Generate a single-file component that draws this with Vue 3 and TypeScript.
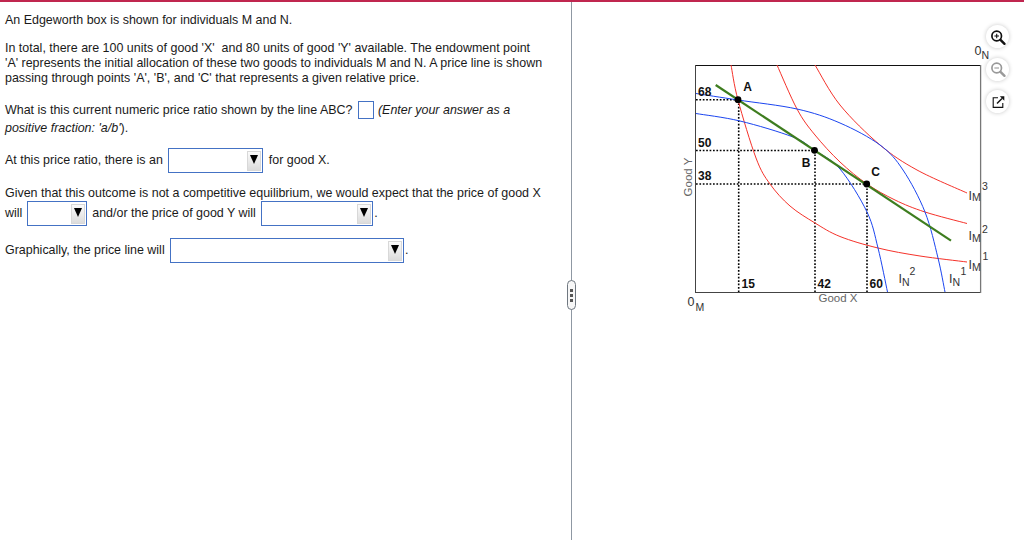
<script setup lang="ts">
type Pt = [number, number]

// catmull-rom through the points, good enough for the indifference curves
function curve(pts: Pt[]): string {
  let d = `M${pts[0][0]} ${pts[0][1]}`
  for (let i = 0; i < pts.length - 1; i++) {
    const p0 = pts[i - 1] ?? pts[i]
    const p1 = pts[i]
    const p2 = pts[i + 1]
    const p3 = pts[i + 2] ?? p2
    const c1x = p1[0] + (p2[0] - p0[0]) / 6
    const c1y = p1[1] + (p2[1] - p0[1]) / 6
    const c2x = p2[0] - (p3[0] - p1[0]) / 6
    const c2y = p2[1] - (p3[1] - p1[1]) / 6
    d += ` C${c1x.toFixed(1)} ${c1y.toFixed(1)} ${c2x.toFixed(1)} ${c2y.toFixed(1)} ${p2[0]} ${p2[1]}`
  }
  return d
}

const redCurves = [
  [[731, 65], [738, 100], [756, 158], [770, 184], [790, 206], [815, 223], [840, 236.5], [878, 248], [920, 256], [967, 262]],
  [[777, 65], [797, 109], [815, 135], [840, 162], [867, 184], [895, 200], [925, 212], [967, 223.5]],
  [[815, 65], [840, 105], [880, 145], [917, 170], [967, 193]],
].map(p => curve(p as Pt[]))

const blueCurves = [
  [[696, 93.5], [738, 100], [797, 109], [840, 123], [880, 145], [903, 170], [925, 212], [938, 258], [945, 292]],
  [[696, 113.5], [740, 121], [793, 137], [814, 150], [840, 169], [867, 212], [878, 248], [887.5, 292]],
].map(p => curve(p as Pt[]))

const points: { x: number; y: number }[] = [
  { x: 738, y: 99.7 },
  { x: 814.5, y: 150.3 },
  { x: 866.7, y: 184 },
]
</script>

<template>
  <div class="page">
    <section class="question">
      <p class="intro">An Edgeworth box is shown for individuals M and N.</p>
      <p class="total">
        In total, there are 100 units of good 'X'&nbsp; and 80 units of good 'Y' available. The endowment point<br />
        'A' represents the initial allocation of these two goods to individuals M and N. A price line is shown<br />
        passing through points 'A', 'B', and 'C' that represents a given relative price.
      </p>
      <p class="ratio">
        What is this current numeric price ratio shown by the line ABC?
        <span class="answer"></span>
        <i>(Enter your answer as a<br />positive fraction: 'a/b'</i>).
      </p>
      <p class="row excess">
        At this price ratio, there is an
        <span class="drop w95"><span class="arrow"></span></span>
        for good X.
      </p>
      <p class="given">Given that this outcome is not a competitive equilibrium, we would expect that the price of good X</p>
      <p class="row will">
        will
        <span class="drop w60"><span class="arrow"></span></span>
        and/or the price of good Y will
        <span class="drop w112"><span class="arrow"></span></span>
        <span class="dot">.</span>
      </p>
      <p class="row graph">
        Graphically, the price line will
        <span class="drop w234"><span class="arrow"></span></span>
        <span class="dot">.</span>
      </p>
    </section>

    <div class="divider">
      <div class="handle"><i></i><i></i><i></i></div>
    </div>

    <section class="figure">
      <svg class="chart" viewBox="572 2 413 538" width="413" height="538">
        <!-- box -->
        <line x1="695" y1="65.5" x2="981" y2="65.5" stroke="#111" stroke-width="1" />
        <line x1="695.5" y1="65" x2="695.5" y2="293" stroke="#444" stroke-width="1" />
        <line x1="695" y1="292.5" x2="981" y2="292.5" stroke="#444" stroke-width="1" />
        <line x1="980.6" y1="65" x2="980.6" y2="293" stroke="#777" stroke-width="1.3" />

        <!-- dotted guides -->
        <g class="guide">
          <line x1="696" y1="99.7" x2="738" y2="99.7" />
          <line x1="696" y1="150.5" x2="815" y2="150.5" />
          <line x1="696" y1="184" x2="867" y2="184" />
          <line x1="738.7" y1="100" x2="738.7" y2="292" />
          <line x1="815" y1="151" x2="815" y2="292" />
          <line x1="867" y1="185" x2="867" y2="292" />
        </g>

        <path v-for="(d, i) in redCurves" :key="'r' + i" :d="d" class="red" />
        <path v-for="(d, i) in blueCurves" :key="'b' + i" :d="d" class="blue" />
        <line x1="715.7" y1="85" x2="951" y2="240.7" class="price" />
        <circle v-for="p in points" :key="p.x" :cx="p.x" :cy="p.y" r="3.4" fill="#000" />

        <g class="bold">
          <text x="747.5" y="91" text-anchor="middle">A</text>
          <text x="806" y="167" text-anchor="middle">B</text>
          <text x="875.5" y="176" text-anchor="middle">C</text>
          <text x="698" y="96">68</text>
          <text x="698" y="147">50</text>
          <text x="698" y="180">38</text>
          <text x="741.5" y="288">15</text>
          <text x="817.5" y="288">42</text>
          <text x="869.5" y="288">60</text>
        </g>

        <g class="axis">
          <text x="838" y="302" text-anchor="middle">Good X</text>
          <text transform="translate(692 177) rotate(-90)" text-anchor="middle">Good Y</text>
        </g>

        <g class="label">
          <text class="big" x="687.5" y="306">0</text><text x="695.5" y="310.5">M</text>
          <text class="big" x="974.5" y="55">0</text><text x="981.5" y="59">N</text>

          <text class="big" x="968.5" y="200">I</text><text x="972" y="201">M</text><text x="982" y="190">3</text>
          <text class="big" x="968.5" y="240">I</text><text x="972" y="242">M</text><text x="982" y="233">2</text>
          <text class="big" x="968.5" y="269">I</text><text x="972" y="271">M</text><text x="982.5" y="260">1</text>
          <text class="big" x="898.5" y="283">I</text><text x="902" y="286">N</text><text x="909.5" y="275">2</text>
          <text class="big" x="949" y="283">I</text><text x="952.5" y="286">N</text><text x="960.5" y="275">1</text>
        </g>
      </svg>

      <div class="tools">
        <button class="tool" type="button" aria-label="Zoom in">
          <svg viewBox="0 0 20 20" width="20" height="20">
            <circle cx="8.7" cy="9" r="4.8" class="glass" />
            <path d="M6.4 9h4.6M8.7 6.7v4.6" stroke="#111" stroke-width="1.1" fill="none" />
            <path d="M12.5 12.8l4 4" stroke="#111" stroke-width="2.4" stroke-linecap="round" />
          </svg>
        </button>
        <button class="tool" type="button" aria-label="Zoom out">
          <svg viewBox="0 0 20 20" width="20" height="20">
            <circle cx="8.7" cy="9" r="4.8" class="glass off" />
            <path d="M6.4 9h4.6" stroke="#999" stroke-width="1.1" fill="none" />
            <path d="M12.5 12.8l4 4" stroke="#999" stroke-width="2.4" stroke-linecap="round" />
          </svg>
        </button>
        <button class="tool" type="button" aria-label="Open in new window">
          <svg viewBox="0 0 20 20" width="20" height="20">
            <path d="M10 5.8H5.2v9.6h9.6V11" fill="none" stroke="#111" stroke-width="1.1" />
            <path d="M9 11.5l5-5" stroke="#111" stroke-width="1.4" />
            <path d="M11.8 4.3h4.5v4.5z" fill="#111" />
          </svg>
        </button>
      </div>
    </section>
  </div>
</template>

<style>
html,
body {
  margin: 0;
  background: #fff;
}
</style>

<style scoped>
.page {
  display: flex;
  width: 1024px;
  height: 540px;
  box-sizing: border-box;
  border-top: 2px solid #c0264f;
  background: #fff;
  overflow: hidden;
  font-family: "Liberation Sans", Arial, sans-serif;
  font-size: 12.46px;
  line-height: 15px;
  color: #1a1a1a;
}
.question {
  width: 571px;
  flex: none;
  box-sizing: border-box;
  padding: 11px 0 0 5px;
}
.question p {
  margin: 0;
  white-space: nowrap;
}
.total {
  margin-top: 13px !important;
}
.ratio {
  margin-top: 15px !important;
  line-height: 18px;
}
.excess {
  margin-top: 11px !important;
}
.given {
  margin-top: 13px !important;
}
.will {
  margin-top: 0 !important;
}
.graph {
  margin-top: 12px !important;
}
.row {
  height: 25px;
  line-height: 25px;
}
.answer {
  display: inline-block;
  width: 14px;
  height: 16px;
  margin: 0 4px 0 2px;
  vertical-align: -5px;
  border: 1px solid #4472c4;
  background: #fff;
}
.drop {
  display: inline-block;
  height: 25px;
  box-sizing: border-box;
  margin: 0 2px;
  vertical-align: top;
  border: 1px solid #4472c4;
  background: #fff;
  position: relative;
}
.will .drop:first-of-type {
  margin-left: 1px;
}
.w95 { width: 95px; }
.w60 { width: 60px; }
.w112 { width: 112px; }
.w234 { width: 234px; }
.arrow {
  position: absolute;
  right: 1px;
  top: 2px;
  width: 14px;
  height: 20px;
  box-sizing: border-box;
  border: 1px solid #d8d8d8;
  background: linear-gradient(#fbfbfb, #dcdcdc);
}
.arrow::after {
  content: "";
  position: absolute;
  left: 2px;
  top: 3px;
  border-left: 4px solid transparent;
  border-right: 4px solid transparent;
  border-top: 9px solid #000;
}
.dot {
  margin-left: -1px;
}
.divider {
  position: relative;
  width: 1px;
  flex: none;
  background: #8f98a3;
}
.handle {
  position: absolute;
  left: -4px;
  top: 278px;
  width: 7px;
  height: 28px;
  border: 1px solid #6f7780;
  border-radius: 5px;
  background: #f7f7f7;
  display: flex;
  flex-direction: column;
  align-items: center;
  justify-content: center;
  gap: 2px;
}
.handle i {
  width: 3px;
  height: 3px;
  background: #555;
}
.figure {
  flex: 1;
  display: flex;
  min-width: 0;
}
.chart {
  flex: none;
  overflow: visible;
}
.guide line {
  stroke: #000;
  stroke-width: 1.6;
  stroke-dasharray: 1.7 1.7;
}
.red {
  fill: none;
  stroke: #f5322a;
  stroke-width: 1;
}
.blue {
  fill: none;
  stroke: #1b45f0;
  stroke-width: 1;
}
.price {
  stroke: #3e7d1f;
  stroke-width: 2.2;
}
.bold text {
  font-family: "Liberation Sans", Arial, sans-serif;
  font-size: 12px;
  font-weight: 700;
  fill: #111;
}
.axis text {
  font-family: "Liberation Sans", Arial, sans-serif;
  font-size: 11.5px;
  fill: #666;
}
.label text {
  font-family: "Liberation Sans", Arial, sans-serif;
  font-size: 10.5px;
  fill: #333;
}
.label .big {
  font-size: 12.5px;
}
.tools {
  display: flex;
  flex-direction: column;
  gap: 9.5px;
  padding: 23px 0 0 1px;
}
.tool {
  width: 23px;
  height: 23px;
  padding: 0;
  border: 0;
  border-radius: 50%;
  background: #fff;
  box-shadow: 0 0 4px rgba(0, 0, 0, 0.22);
  display: flex;
  align-items: center;
  justify-content: center;
}
.glass {
  fill: none;
  stroke: #111;
  stroke-width: 1.7;
}
.glass.off {
  stroke: #999;
}
</style>
